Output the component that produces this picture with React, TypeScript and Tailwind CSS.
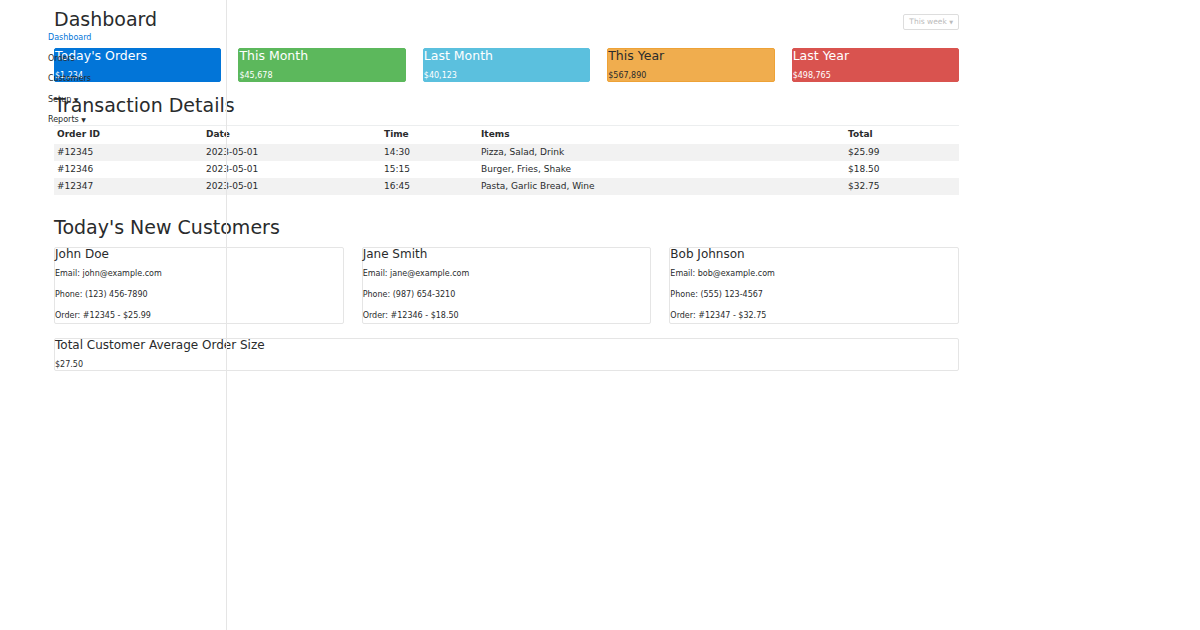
export default function App() {
  const cards = [
    { t: "Today's Orders", v: "$1,234", c: "bg-[#0275d8] text-white border-[#0275d8]" },
    { t: "This Month", v: "$45,678", c: "bg-[#5cb85c] text-white border-[#5cb85c]" },
    { t: "Last Month", v: "$40,123", c: "bg-[#5bc0de] text-white border-[#5bc0de]" },
    { t: "This Year", v: "$567,890", c: "bg-[#f0ad4e] text-[#292b2c] border-[#eea236]" },
    { t: "Last Year", v: "$498,765", c: "bg-[#d9534f] text-white border-[#d9534f]" },
  ];
  const rows = [
    ["#12345", "2023-05-01", "14:30", "Pizza, Salad, Drink", "$25.99"],
    ["#12346", "2023-05-01", "15:15", "Burger, Fries, Shake", "$18.50"],
    ["#12347", "2023-05-01", "16:45", "Pasta, Garlic Bread, Wine", "$32.75"],
  ];
  const custs = [
    ["John Doe", "john@example.com", "(123) 456-7890", "#12345 - $25.99"],
    ["Jane Smith", "jane@example.com", "(987) 654-3210", "#12346 - $18.50"],
    ["Bob Johnson", "bob@example.com", "(555) 123-4567", "#12347 - $32.75"],
  ];
  return (
    <div className="relative w-[1200px] h-[630px] bg-white text-[#292b2c] overflow-hidden" style={{ fontFamily: '"DejaVu Sans", sans-serif' }}>
      <div className="absolute left-0 top-0 h-[630px] w-[227px] border-r border-[#e5e5e5] pl-[48px] pt-[32px] text-[8px] z-10 pointer-events-none">
        <div className="h-[20.5px] leading-[12px] text-[#0275d8]">Dashboard</div>
        <div className="h-[20.5px] leading-[12px]">Orders</div>
        <div className="h-[20.5px] leading-[12px]">Customers</div>
        <div className="h-[20.5px] leading-[12px]">Setup <span className="text-[6px]">▼</span></div>
        <div className="h-[20.5px] leading-[12px]">Reports <span className="text-[6px]">▼</span></div>
      </div>
      <div className="ml-[54px] w-[905px] pt-[7px]">
        <div className="flex justify-between items-start">
          <div className="text-[19px] leading-[24px]">Dashboard</div>
          <div className="mt-[7px] border border-[#ddd] rounded-[2px] px-[5px] h-[16px] text-[7.5px] leading-[14px] text-[#bbb]">This week <span className="text-[5px]">▼</span></div>
        </div>
        <div className="flex gap-[17px] mt-[17px]">
          {cards.map((c) => (
            <div key={c.t} className={`w-[168px] h-[34px] rounded-[2px] border ${c.c}`}>
              <div className="text-[12.5px] leading-[14px]">{c.t}</div>
              <div className="text-[8px] leading-[10px] mt-[8px]">{c.v}</div>
            </div>
          ))}
        </div>
        <div className="text-[19px] leading-[24px] mt-[11px]">Transaction Details</div>
        <table className="w-full mt-[8px] text-[9px] border-collapse">
          <thead>
            <tr className="border-t border-[#eceeef] h-[18px]">
              {["Order ID", "Date", "Time", "Items", "Total"].map((h, i) => (
                <th key={h} className={`text-left font-bold pl-[3px] ${["w-[149px]", "w-[178px]", "w-[97px]", "w-[367px]", ""][i]}`}>{h}</th>
              ))}
            </tr>
          </thead>
          <tbody>
            {rows.map((r, i) => (
              <tr key={r[0]} className={`h-[17px] ${i % 2 === 0 ? "bg-[#f2f2f2]" : ""}`}>
                {r.map((x, j) => <td key={j} className="pl-[3px] pt-[1px]">{x}</td>)}
              </tr>
            ))}
          </tbody>
        </table>
        <div className="text-[19px] leading-[24px] mt-[20px]">Today's New Customers</div>
        <div className="flex gap-[18px] mt-[8px]">
          {custs.map((c) => (
            <div key={c[0]} className="w-[290px] h-[77px] border border-[#e5e5e5] rounded-[2px]">
              <div className="text-[12px] leading-[13px]">{c[0]}</div>
              <div className="text-[8px] leading-[10px] mt-[8px]">Email: {c[1]}</div>
              <div className="text-[8px] leading-[10px] mt-[11px]">Phone: {c[2]}</div>
              <div className="text-[8px] leading-[10px] mt-[11px]">Order: {c[3]}</div>
            </div>
          ))}
        </div>
        <div className="mt-[14px] h-[33px] border border-[#e5e5e5] rounded-[2px]">
          <div className="text-[12px] leading-[13px]">Total Customer Average Order Size</div>
          <div className="text-[8px] leading-[10px] mt-[8px]">$27.50</div>
        </div>
      </div>
    </div>
  );
}
